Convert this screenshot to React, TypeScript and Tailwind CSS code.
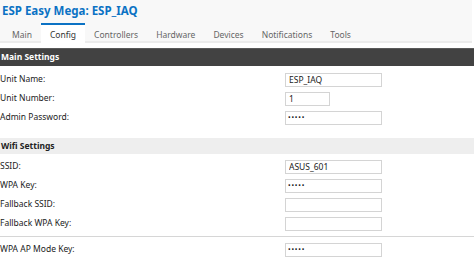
import React from 'react';

const TABS = ['Main', 'Config', 'Controllers', 'Hardware', 'Devices', 'Notifications', 'Tools'];

interface FieldProps {
  label: string;
  value?: string;
  password?: boolean;
  narrow?: boolean;
}

function Field({ label, value = '', password, narrow }: FieldProps): React.ReactNode {
  return (
    <div className="flex h-[19px] items-center">
      <label className="w-[285px] shrink-0 text-[8.5px] text-[#222]">{label}</label>
      {password ? (
        <div className={`flex h-[14px] items-center border border-[#d4d4d4] bg-white pl-[2px] ${narrow ? 'w-[45px]' : 'w-[97px]'}`}>
          <span className="text-[7px] leading-none tracking-[0.8px] text-[#222]">•••••</span>
        </div>
      ) : (
        <input
          type="text"
          defaultValue={value}
          className={`h-[14px] border border-[#d4d4d4] bg-white px-[3px] text-[8.5px] text-[#222] outline-none ${narrow ? 'w-[45px]' : 'w-[97px]'}`}
        />
      )}
    </div>
  );
}

export default function App(): React.ReactNode {
  return (
    <div className="h-[267px] w-[474px] overflow-hidden bg-white" style={{ fontFamily: '"Noto Sans", "Open Sans", sans-serif' }}>
      <div className="mr-[2px] border-b-2 border-[#ececec] bg-[#f8f8f8]">
        <h1 className="h-[23px] pl-[2px] pt-[3px] text-[11.5px] font-bold leading-[16px] text-[#0b72c4]">ESP Easy Mega: ESP_IAQ</h1>
        <nav className="-mb-[2px] flex h-[20px] pl-[3px]">
          {TABS.map(tab => (
            <div
              key={tab}
              className={`flex items-center px-[9px] pt-[2px] text-[8.5px] ${
                tab === 'Config' ? 'border-t-2 border-[#0b72c4] bg-white text-[#333]' : 'border-t-2 border-transparent text-[#666]'
              }`}
            >
              {tab}
            </div>
          ))}
        </nav>
      </div>

      <div className="mt-[5px] flex h-[18px] items-center border-t border-[#5a5a5a] bg-[#424242] pl-[1px] text-[8.5px] font-bold text-white">Main Settings</div>
      <div className="mt-[4px]">
        <Field label="Unit Name:" value="ESP_IAQ" />
        <Field label="Unit Number:" value="1" narrow />
        <Field label="Admin Password:" password />
      </div>

      <div className="mt-[11px] flex h-[16px] items-center bg-[#eeeeee] pl-[1px] text-[8.5px] font-bold text-[#222]">Wifi Settings</div>
      <div className="mt-[3px]">
        <Field label="SSID:" value="ASUS_601" />
        <Field label="WPA Key:" password />
        <Field label="Fallback SSID:" />
        <Field label="Fallback WPA Key:" />
      </div>
      <div className="mt-[3px] h-px bg-[#d6d6d6]" />
      <div className="mt-[3px]">
        <Field label="WPA AP Mode Key:" password />
      </div>
    </div>
  );
}
